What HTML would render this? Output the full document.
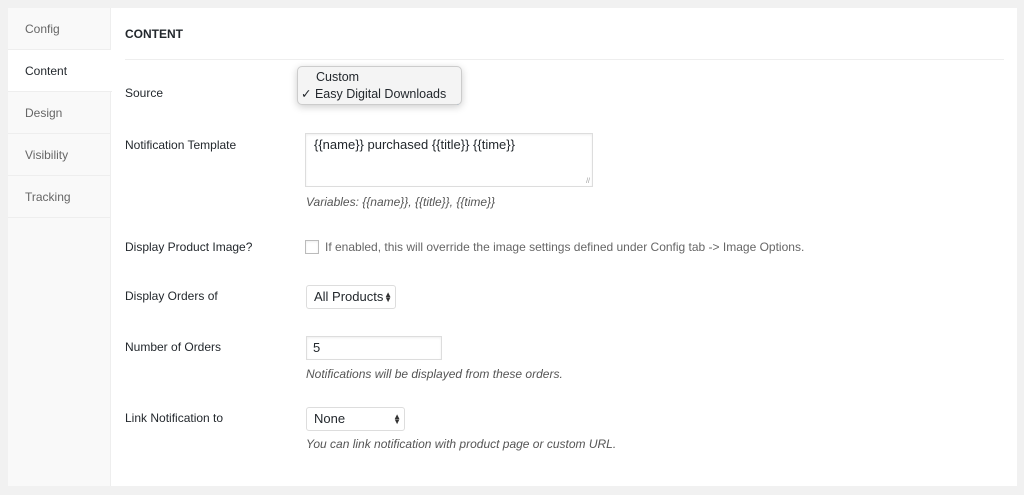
<!DOCTYPE html>
<html><head><meta charset="utf-8"><style>
*{box-sizing:border-box;margin:0;padding:0}
body{width:1024px;height:495px;background:#f1f1f1;font-family:"Liberation Sans",Arial,sans-serif;font-size:12px;color:#23282d;position:relative;overflow:hidden}
.panel{position:absolute;left:8px;top:8px;width:1009px;height:478px;background:#fff}
.side{position:absolute;left:8px;top:8px;width:103px;height:478px;background:#f9f9f9;border-right:1px solid #eee}
.tab{position:absolute;left:8px;width:103px;height:42px;line-height:42px;padding-left:17px;color:#666;border-bottom:1px solid #eee}
.tab.act{background:#fff;color:#23282d;width:104px}
.a{position:absolute;white-space:nowrap}
.lbl{position:absolute;left:125px;color:#23282d}
.desc{position:absolute;left:306px;font-style:italic;color:#555;font-size:12px}
.box{position:absolute;border:1px solid #ddd;box-shadow:inset 0 1px 2px rgba(0,0,0,.07);background:#fff}
.sel{position:absolute;border:1px solid #ddd;border-radius:3px;background:#fff;padding-left:7px;font-size:13px}
.arr{position:absolute;right:3px;top:6px;font-size:8px;line-height:5px;color:#333}
</style></head><body>
<div class="panel"></div>
<div class="side"></div>
<div class="tab" style="top:8px">Config</div>
<div class="tab act" style="top:50px">Content</div>
<div class="tab" style="top:92px">Design</div>
<div class="tab" style="top:134px">Visibility</div>
<div class="tab" style="top:176px">Tracking</div>

<div class="a" style="left:125px;top:27px;font-weight:bold;font-size:12px">CONTENT</div>
<div class="a" style="left:125px;top:59px;width:879px;height:1px;background:#eee"></div>

<div class="lbl" style="top:86px">Source</div>
<div class="a" style="left:307px;top:102px;width:152px;height:3px;background:#5b9dd9;border-radius:2px"></div>
<div class="a" style="left:297px;top:66px;width:165px;height:39px;background:#f4f4f4;border:1px solid #ccc;border-radius:5px;box-shadow:0 2px 8px rgba(0,0,0,.2);font-size:12.5px">
<div class="a" style="left:18px;top:3px">Custom</div>
<div class="a" style="left:3px;top:19px">✓ Easy Digital Downloads</div>
</div>

<div class="lbl" style="top:138px">Notification Template</div>
<div class="box" style="left:305px;top:133px;width:288px;height:54px;padding:3px 8px;font-size:13px">{{name}} purchased {{title}} {{time}}
<div class="a" style="right:2px;bottom:1px;font-size:7px;color:#999">//</div></div>
<div class="desc" style="top:195px">Variables: {{name}}, {{title}}, {{time}}</div>

<div class="lbl" style="top:240px">Display Product Image?</div>
<div class="box" style="left:305px;top:240px;width:14px;height:14px;border-color:#bbb"></div>
<div class="a" style="left:325px;top:240px;color:#666">If enabled, this will override the image settings defined under Config tab -&gt; Image Options.</div>

<div class="lbl" style="top:289px">Display Orders of</div>
<div class="sel" style="left:306px;top:285px;width:90px;height:24px;line-height:22px">All Products<div class="arr">▲<br>▼</div></div>

<div class="lbl" style="top:340px">Number of Orders</div>
<div class="box" style="left:306px;top:336px;width:136px;height:24px;line-height:22px;padding-left:6px;font-size:13px">5</div>
<div class="desc" style="top:367px">Notifications will be displayed from these orders.</div>

<div class="lbl" style="top:411px">Link Notification to</div>
<div class="sel" style="left:306px;top:407px;width:99px;height:24px;line-height:22px">None<div class="arr">▲<br>▼</div></div>
<div class="desc" style="top:437px">You can link notification with product page or custom URL.</div>
</body></html>
